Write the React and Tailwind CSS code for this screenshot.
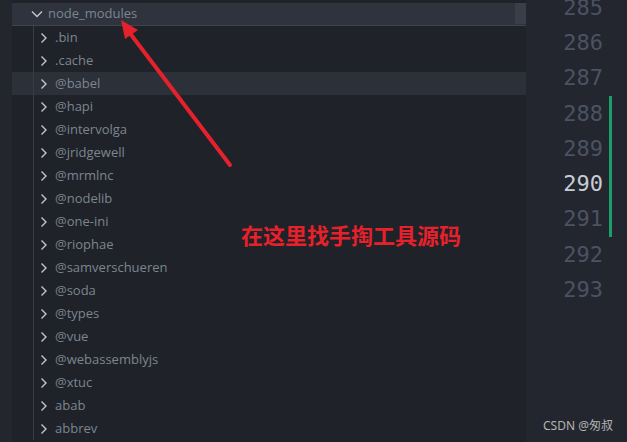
import React from "react";

const items = [
  ".bin", ".cache", "@babel", "@hapi", "@intervolga", "@jridgewell", "@mrmlnc",
  "@nodelib", "@one-ini", "@riophae", "@samverschueren", "@soda", "@types",
  "@vue", "@webassemblyjs", "@xtuc", "abab", "abbrev",
];

const lines = [285, 286, 287, 288, 289, 290, 291, 292, 293];

function ChevronRight() {
  return (
    <svg width="8" height="12" viewBox="0 0 8 12" fill="none">
      <path d="M1.5 1.5 L6 6 L1.5 10.5" stroke="#c3c7ce" strokeWidth="1.4" />
    </svg>
  );
}

function ChevronDown() {
  return (
    <svg width="12" height="8" viewBox="0 0 12 8" fill="none">
      <path d="M1 1.5 L6 6.5 L11 1.5" stroke="#c3c7ce" strokeWidth="1.4" />
    </svg>
  );
}

export default function App() {
  return (
    <div className="relative flex w-[627px] h-[442px] overflow-hidden bg-[#1f2228]" style={{ fontFamily: '"Open Sans", "Noto Sans", sans-serif' }}>
      <div className="w-[12px] bg-[#23262d]" />
      <div className="w-[514px] pt-[3px] flex flex-col">
        <div className="relative h-[23px] flex items-center bg-[#2f333d] border-b border-[#3e434d]">
          <div className="pl-[19px] w-[36px] flex items-center">
            <ChevronDown />
          </div>
          <span className="text-[13px] text-[#7d8590]">node_modules</span>
          <div className="absolute right-0 top-0 w-[11px] h-[21px] bg-[#393e48]" />
        </div>
        {items.map((name) => (
          <div
            key={name}
            className={`h-[23px] flex shrink-0 pl-[21px] ${name === "@babel" ? "bg-[#2c3039]" : ""}`}
          >
            <div className="h-full border-l border-[#383c44] flex items-center pl-[6px]">
              <div className="w-[15px] flex items-center">
                <ChevronRight />
              </div>
              <span className="text-[13px] text-[#7d8590]">{name}</span>
            </div>
          </div>
        ))}
      </div>
      <div className="flex-1 bg-[#23262e] flex flex-col mt-[-10px]">
        {lines.map((n) => (
          <div key={n} className="h-[35.3px] shrink-0 flex items-stretch justify-end pr-[15px]">
            <span
              className={`flex items-center text-[22px] leading-none ${n === 290 ? "text-[#c8ccd4]" : "text-[#4b5263]"}`}
              style={{ fontFamily: '"DejaVu Sans Mono", monospace' }}
            >
              {n}
            </span>
            <div className={`ml-[6px] w-[3px] ${n >= 288 && n <= 291 ? "bg-[#1b9e6a]" : ""}`} />
          </div>
        ))}
      </div>

      <svg className="absolute left-0 top-0" width="627" height="442" viewBox="0 0 627 442">
        <line x1="230" y1="165" x2="129" y2="32" stroke="#e5212b" strokeWidth="4" strokeLinecap="round" />
        <polygon points="121,20 138,30 125,39" fill="#e5212b" />
      </svg>

      <div
        className="absolute left-[241px] top-[221px] text-[22px] leading-[26px] font-bold text-[#e5212b] tracking-[0px]"
        style={{ fontFamily: '"Noto Sans CJK SC", sans-serif' }}
      >
        在这里找手掏工具源码
      </div>

      <div
        className="absolute left-[543px] top-[417px] text-[12px] text-[#b4b4b4]"
        style={{ fontFamily: '"Noto Sans", "Noto Sans CJK SC", sans-serif' }}
      >
        CSDN @匆叔
      </div>
    </div>
  );
}
